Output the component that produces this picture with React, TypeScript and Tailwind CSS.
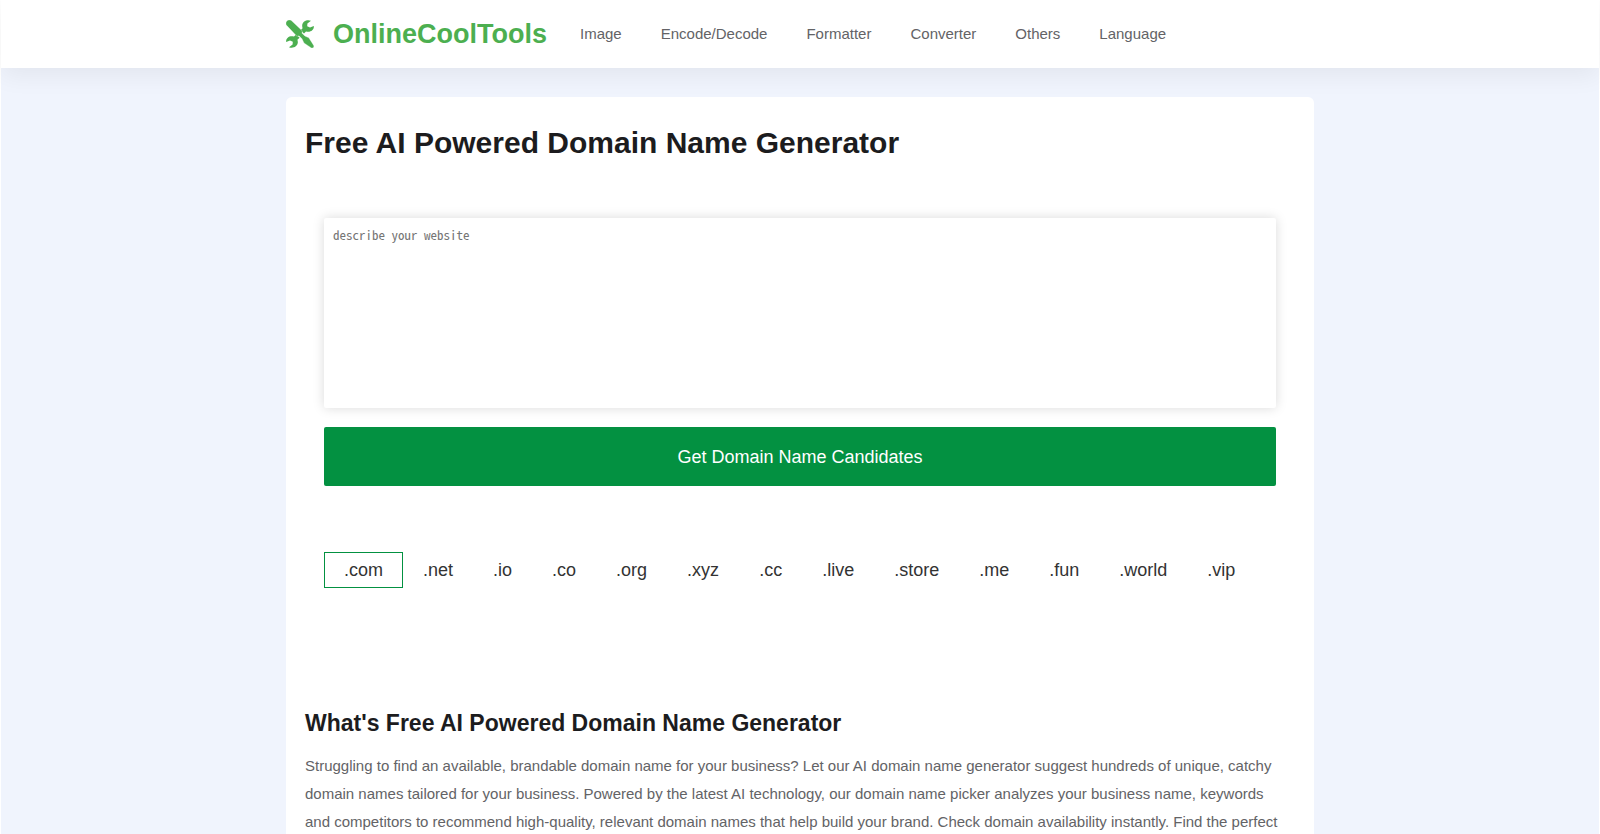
import React, { useState } from 'react';

const NAV_ITEMS = ['Image', 'Encode/Decode', 'Formatter', 'Converter', 'Others', 'Language'];

const EXTENSIONS = ['.com', '.net', '.io', '.co', '.org', '.xyz', '.cc', '.live', '.store', '.me', '.fun', '.world', '.vip'];

const ToolsLogo: React.FC = () => (
  <svg viewBox="0 0 28 28" className="h-7 w-7 shrink-0" fill="#4caf50" aria-hidden="true">
    {/* Double-ended wrench */}
    <path d="M27.8 6 L24 7.4 L21.2 6.2 L21.4 3.4 L25 .8 C21-.8 16.6 1.4 16.2 5.2 C16.1 6.4 16.3 7.3 16.6 8.2 L14.6 10.2 L18 13.4 L20 11.4 C24.4 12.8 28.4 10 27.8 6Z" />
    <path d="M.2 22 L4 20.6 L6.8 21.8 L6.6 24.6 L3 27.2 C7 28.8 11.4 26.6 11.8 22.8 C11.9 21.6 11.7 20.7 11.4 19.8 L13.6 17.8 L10.2 14.4 L8 16.6 C3.6 15.2-.4 18 .2 22Z" />
    {/* Screwdriver */}
    <path d="M.8 5.6 C-.5 4.2-.3 2.2.9 1 C2.1-.2 4.2-.5 5.6.8 L15.6 10.2 C16.4 11.2 16.4 12.2 15.8 13 L18.8 16 L22.8 17.8 L27.7 25.4 C28.3 27 27 28.5 25.4 27.9 L18 23 L16 18.8 L13 15.8 C12.2 16.4 11.2 16.4 10.2 15.6Z" stroke="#fff" strokeWidth="0.3" />
  </svg>
);

export default function App() {
  const [description, setDescription] = useState('');
  const [selected, setSelected] = useState('.com');

  return (
    <div className="min-h-screen border-x border-b border-white bg-[#f0f4fd] font-['Liberation_Sans',Arial,sans-serif] text-[#1c1c1e]">
      <header className="bg-white shadow-[0_8px_24px_rgba(0,0,0,0.06)]">
        <div className="mx-auto flex h-17 max-w-[1028px] items-center">
          <a href="#" className="mr-[33px] flex items-center gap-[19px] text-[27px] leading-8 font-bold text-[#4caf50]">
            <ToolsLogo />
            OnlineCoolTools
          </a>
          <nav className="flex items-center gap-[39px] text-[15px] text-[#636366]">
            {NAV_ITEMS.map((item) => (
              <a key={item} href="#">{item}</a>
            ))}
          </nav>
        </div>
      </header>

      <main className="mx-auto mt-[29px] max-w-[1028px] rounded-t-md bg-white px-[19px] pt-6">
        <h1 className="text-[30px] leading-[44px] font-bold">Free AI Powered Domain Name Generator</h1>

        <form className="px-[19px] pt-[53px]" onSubmit={(e) => e.preventDefault()}>
          <textarea
            value={description}
            onChange={(e) => setDescription(e.target.value)}
            placeholder="describe your website"
            aria-label="Describe your website"
            className="block h-[190px] w-full resize-none rounded-xs bg-white p-[9px] font-['Noto_Sans_Mono_CJK_SC','Noto_Sans_Mono_CJK_JP',monospace] text-[13px] leading-4 shadow-[0_0_12px_rgba(0,0,0,0.15)] outline-none placeholder:text-[#757575]"
          />
          <button type="submit" className="mt-[19px] h-[59px] w-full rounded-xs bg-[#039141] text-lg text-white">
            Get Domain Name Candidates
          </button>
        </form>

        <div className="mt-[66px] flex flex-wrap px-[19px]">
          {EXTENSIONS.map((ext) => (
            <button
              key={ext}
              type="button"
              aria-pressed={selected === ext}
              onClick={() => setSelected(ext)}
              className={`h-9 border px-[19px] text-lg text-[#333333] ${selected === ext ? 'border-[#039141]' : 'border-transparent'}`}
            >
              {ext}
            </button>
          ))}
        </div>

        <section className="mt-[117px]">
          <h2 className="text-[23px] leading-9 font-bold">What's Free AI Powered Domain Name Generator</h2>
          <p className="mt-[11px] pr-2 text-[15px] leading-7 text-[#636366]">
            Struggling to find an available, brandable domain name for your business? Let our AI domain name generator suggest hundreds of unique, catchy domain names tailored for your business. Powered by the latest AI technology, our domain name picker analyzes your business name, keywords and competitors to recommend high-quality, relevant domain names that help build your brand. Check domain availability instantly. Find the perfect
          </p>
        </section>
      </main>
    </div>
  );
}
